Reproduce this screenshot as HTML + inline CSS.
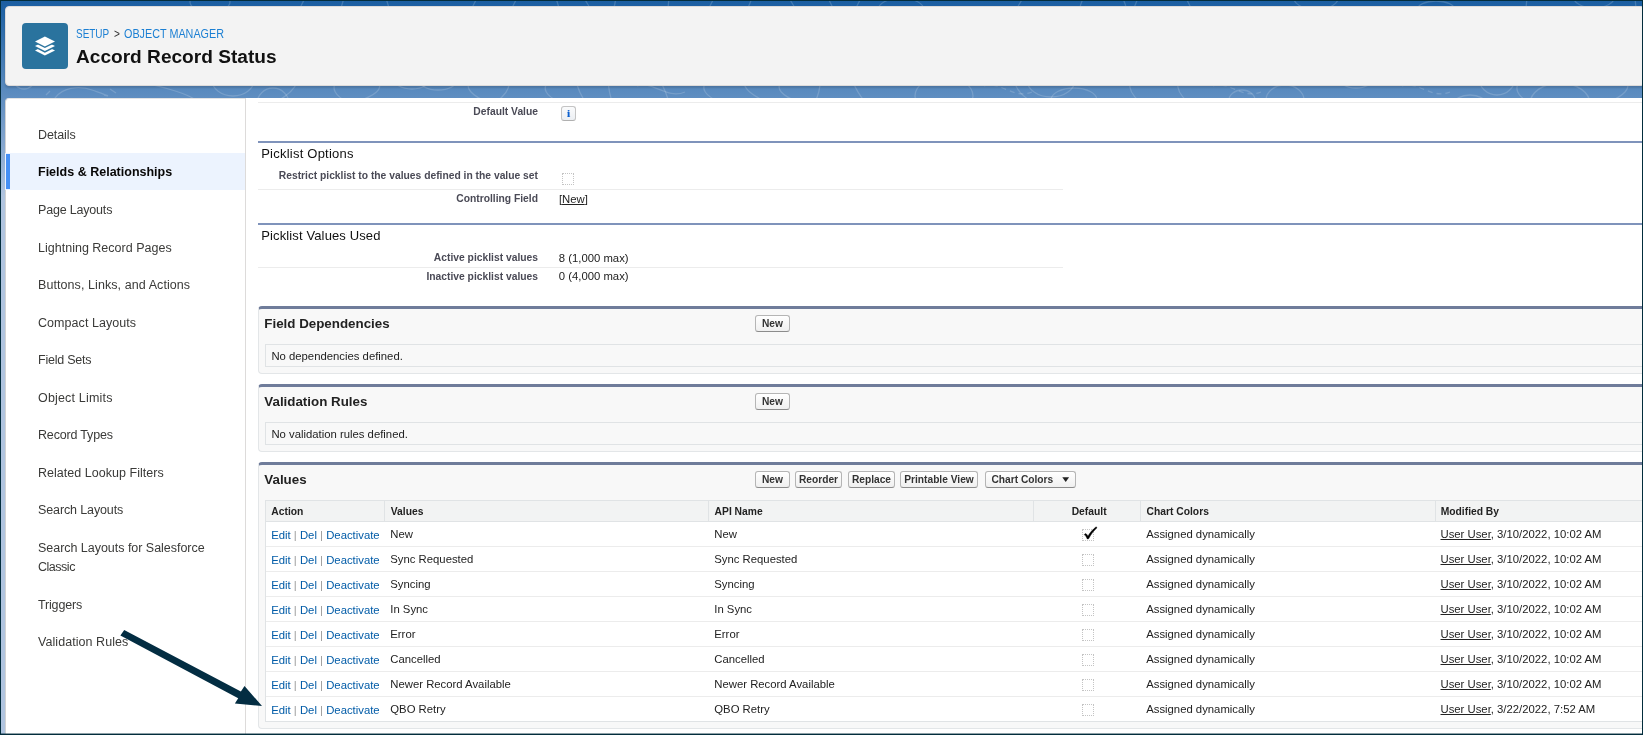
<!DOCTYPE html>
<html lang="en">
<head>
<meta charset="utf-8">
<title>Accord Record Status</title>
<style>
*{box-sizing:border-box;margin:0;padding:0}
html,body{width:1643px;height:735px;overflow:hidden}
body{position:relative;font-family:"Liberation Sans",Arial,sans-serif;color:#222;
 background:#b0c4df linear-gradient(180deg,#1b5ea1 0px,#1d60a3 6px,#5b8bbf 92px,#84a6cf 143px,#b0c4df 196px,#b0c4df 735px)}
#root{position:absolute;left:0;top:0;width:1643px;height:735px;will-change:transform}
.abs{position:absolute}
.t{position:absolute;white-space:nowrap;color:#222}
#frame{position:absolute;left:0;top:0;width:1643px;height:735px;border-style:solid;border-color:#032d3c;border-width:1px 1px 1px 1px;box-shadow:inset 0 -1px 0 rgba(3,45,60,.45);z-index:50;pointer-events:none}
#hdr{left:5px;top:6px;width:1640px;height:80px;background:#f3f3f3;border:1px solid #dddbda;border-radius:4px;box-shadow:0 2px 2px rgba(0,0,0,.14)}
#icon{left:22px;top:23px;width:46px;height:46px;border-radius:4px;background:#2a739e}
.crumb{position:absolute;top:25.5px;font-size:12.3px;line-height:16px;color:#1b7fd3;white-space:nowrap;transform-origin:0 0}
#title{left:76px;top:45px;font-size:19.1px;line-height:24px;font-weight:bold;color:#111;white-space:nowrap}
#side{left:5px;top:98px;width:241px;height:640px;background:#fff;border-radius:4px 0 0 0;border-left:1px solid #d2d2d2;border-top:1px solid #e4e4e4}
#main{left:246px;top:98px;width:1400px;height:640px;background:#fff}
#vdiv{left:245px;top:98px;width:1px;height:640px;background:#dddbda}
.nav{position:absolute;left:38px;font-size:12.5px;line-height:19px;color:#3a3a38;white-space:nowrap}
#act{left:5px;top:153px;width:240px;height:37px;background:#ecf3fe}
#actbar{left:6px;top:154px;width:4px;height:35px;background:#4590f5}
.lab{font-weight:bold;color:#4a4a56}
.sec{color:#111}
.hl{background:#7f93bb}
.sep{background:#ececec}
.blk{background:#f8f8f8;border:1px solid #e3e6e8;border-top:3px solid #6f7c9a;border-radius:4px 0 0 4px;border-right:0}
.inner{background:#f8f8f8;border:1px solid #e0e3e5;border-right:0}
.bt{font-weight:bold;color:#222}
.btn{position:absolute;height:17px;border:1px solid #b5b5b5;border-bottom-color:#8c8c8c;border-radius:3px;background:linear-gradient(#fff,#f0f0f0);font-size:10.2px;line-height:15px;font-weight:bold;color:#333;text-align:center;white-space:nowrap}
.th{font-weight:bold;color:#222}
a,.lk{color:#015ba7;text-decoration:none}
.pipe{color:#9a9a9a}
u{text-decoration:underline}
.cb{position:absolute;width:12px;height:12px;border:1px dotted #c4c4c4}
</style>
</head>
<body>
<div id="root">
<svg class="abs" style="left:0;top:0" width="1643" height="110" viewBox="0 0 1643 110"><g fill="none" stroke="#fff" stroke-opacity=".17" stroke-width="1.3"><circle cx="24" cy="78" r="11"/><path d="M55 98 C62 88 78 85 92 90 S112 97 104 95"/><path d="M46 95 L50 91"/><path d="M110 89 L116 93"/><path d="M150 84 C165 88 185 92 196 100"/><ellipse cx="210" cy="2" rx="20" ry="10"/><ellipse cx="233" cy="80" rx="21" ry="16"/><ellipse cx="273" cy="104" rx="16" ry="16"/><path d="M297 82 Q294 92 276 102"/><path d="M305 -2 L300 8"/><path d="M336 82 Q329 92 347 102"/><path d="M344 -2 L341 8"/><path d="M378 82 Q386 92 356 102"/><path d="M386 -2 L389 8"/><ellipse cx="412" cy="78" rx="19" ry="11"/><ellipse cx="438" cy="80" rx="19" ry="10"/><path d="M469 82 Q464 92 487 102"/><path d="M477 -2 L472 8"/><path d="M509 82 Q510 92 496 102"/><path d="M517 -2 L512 8"/><path d="M548 82 Q539 92 559 102"/><path d="M556 -2 L559 8"/><path d="M576 82 Q579 92 585 102"/><path d="M584 -2 L590 8"/><path d="M608 82 Q609 92 612 102"/><path d="M616 -2 L614 8"/><path d="M637 86 C652 80 667 100 685 92" stroke-dasharray="none"/><path d="M661 82 Q666 92 669 102"/><path d="M669 -2 L668 8"/><path d="M706 82 Q698 92 719 102"/><path d="M714 -2 L709 8"/><path d="M744 82 Q744 92 767 102"/><path d="M752 -2 L748 8"/><path d="M781 82 Q773 92 798 102"/><path d="M789 -2 L795 8"/><path d="M820 82 Q820 92 815 102"/><path d="M828 -2 L833 8"/><path d="M853 82 Q857 92 865 102"/><path d="M861 -2 L856 8"/><ellipse cx="901" cy="10" rx="23" ry="12"/><ellipse cx="944" cy="96" rx="29" ry="19"/><path d="M984 86 C999 80 1014 100 1032 92" stroke-dasharray="5 4"/><path d="M1015 82 Q1016 92 1032 102"/><path d="M1023 -2 L1017 8"/><ellipse cx="1051" cy="80" rx="24" ry="17"/><ellipse cx="1074" cy="100" rx="23" ry="12"/><ellipse cx="1103" cy="10" rx="23" ry="22"/><path d="M1130 82 Q1128 92 1140 102"/><path d="M1138 -2 L1134 8"/><path d="M1178 82 Q1176 92 1188 102"/><path d="M1186 -2 L1191 8"/><path d="M1213 86 C1228 80 1243 100 1261 92" stroke-dasharray="5 4"/><ellipse cx="1242" cy="100" rx="13" ry="10"/><ellipse cx="1285" cy="100" rx="19" ry="15"/><ellipse cx="1316" cy="-4" rx="23" ry="14"/><ellipse cx="1356" cy="78" rx="17" ry="10"/><path d="M1402 86 C1417 80 1432 100 1450 92" stroke-dasharray="5 4"/><ellipse cx="1436" cy="10" rx="19" ry="9"/><ellipse cx="1470" cy="104" rx="16" ry="9"/><ellipse cx="1497" cy="78" rx="18" ry="17"/><path d="M1519 82 Q1512 92 1528 102"/><path d="M1527 -2 L1526 8"/><ellipse cx="1560" cy="104" rx="30" ry="21"/><ellipse cx="1594" cy="-4" rx="21" ry="12"/><path d="M1627 82 Q1632 92 1609 102"/><path d="M1635 -2 L1636 8"/></g></svg>
<div id="hdr" class="abs"></div>
<div id="icon" class="abs"><svg width="46" height="46" viewBox="0 0 46 46"><g fill="#fff" stroke="#2a739e" stroke-width="2.8" stroke-linejoin="miter" paint-order="stroke">
<path d="M13 27.4 L22.9 22.4 L33 27.4 L22.9 32.5 Z"/>
<path d="M13 23 L22.9 18 L33 23 L22.9 28.1 Z"/>
<path d="M13 18.4 L22.9 13.4 L33 18.4 L22.9 23.5 Z"/>
</g></svg></div>
<div class="crumb" style="left:76.3px;transform:scaleX(.81)">SETUP</div>
<div class="crumb" style="left:114px;color:#333;transform:scaleX(.82)">&gt;</div>
<div class="crumb" style="left:124.4px;transform:scaleX(.878)">OBJECT MANAGER</div>
<div id="title" class="abs">Accord Record Status</div>

<div id="side" class="abs"></div>
<div id="main" class="abs"></div>
<div id="vdiv" class="abs"></div>
<div id="act" class="abs"></div>
<div id="actbar" class="abs"></div>

<div class="nav" style="top:125.5px;letter-spacing:-0.086px">Details</div>
<div class="nav" style="top:162.5px;letter-spacing:0.007px;font-weight:bold;color:#080707">Fields &amp; Relationships</div>
<div class="nav" style="top:200.5px;letter-spacing:-0.187px">Page Layouts</div>
<div class="nav" style="top:238.5px;letter-spacing:0.012px">Lightning Record Pages</div>
<div class="nav" style="top:275.5px;letter-spacing:0.077px">Buttons, Links, and Actions</div>
<div class="nav" style="top:313.5px;letter-spacing:0.058px">Compact Layouts</div>
<div class="nav" style="top:350.5px;letter-spacing:-0.222px">Field Sets</div>
<div class="nav" style="top:388.5px;letter-spacing:0.179px">Object Limits</div>
<div class="nav" style="top:425.5px;letter-spacing:-0.173px">Record Types</div>
<div class="nav" style="top:463.5px;letter-spacing:0.030px">Related Lookup Filters</div>
<div class="nav" style="top:500.5px;letter-spacing:-0.120px">Search Layouts</div>
<div class="nav" style="top:538.5px;letter-spacing:-0.030px">Search Layouts for Salesforce</div>
<div class="nav" style="top:557.5px;letter-spacing:-0.483px">Classic</div>
<div class="nav" style="top:595.5px;letter-spacing:-0.170px">Triggers</div>
<div class="nav" style="top:632.5px;letter-spacing:0.060px">Validation Rules</div>
<div class="abs sep" style="left:258px;top:102px;width:1385px;height:1px;"></div>
<div class="t lab" style="top:104.5px;font-size:10.3px;line-height:14.0px;right:1105.00px;">Default Value</div>
<div class="abs" style="left:561px;top:106px;width:15px;height:15px;border:1px solid #c4c4c4;border-bottom-color:#b0b0b0;border-radius:3px;background:linear-gradient(#fafbfc,#eceff3);font-family:'Liberation Serif',serif;font-weight:bold;font-size:10.5px;line-height:13px;text-align:center;color:#0b5fcf"><span style="display:inline-block;transform:scaleX(1.25)">i</span></div>
<div class="abs hl" style="left:258px;top:141px;width:1385px;height:2px;"></div>
<div class="t sec" style="top:146.5px;font-size:13px;line-height:14.0px;left:261.20px;letter-spacing:.23px">Picklist Options</div>
<div class="t lab" style="top:168.5px;font-size:10.3px;line-height:14.0px;right:1105.00px;">Restrict picklist to the values defined in the value set</div>
<div class="cb" style="left:562px;top:173px"></div>
<div class="abs sep" style="left:258px;top:189px;width:805px;height:1px;"></div>
<div class="t lab" style="top:191.5px;font-size:10.3px;line-height:14.0px;right:1105.00px;">Controlling Field</div>
<div class="t " style="top:192.0px;font-size:11.32px;line-height:14.0px;left:558.90px;">[<u>New</u>]</div>
<div class="abs hl" style="left:258px;top:223px;width:1385px;height:2px;"></div>
<div class="t sec" style="top:228.5px;font-size:13px;line-height:14.0px;left:261.20px;letter-spacing:.13px">Picklist Values Used</div>
<div class="t lab" style="top:250.5px;font-size:10.3px;line-height:14.0px;right:1105.00px;">Active picklist values</div>
<div class="t " style="top:251.0px;font-size:11.32px;line-height:14.0px;left:558.80px;">8 (1,000 max)</div>
<div class="abs sep" style="left:258px;top:267px;width:805px;height:1px;"></div>
<div class="t lab" style="top:269.5px;font-size:10.3px;line-height:14.0px;right:1105.00px;">Inactive picklist values</div>
<div class="t " style="top:269.0px;font-size:11.32px;line-height:14.0px;left:558.80px;">0 (4,000 max)</div>
<div class="abs blk" style="left:258px;top:306px;width:1390px;height:68px;"></div>
<div class="t bt" style="top:316.5px;font-size:13.35px;line-height:14.0px;left:264.30px;">Field Dependencies</div>
<div class="btn" style="left:755px;top:315px;width:35px;">New</div>
<div class="abs inner" style="left:265px;top:344px;width:1380px;height:23px;"></div>
<div class="t " style="top:349.0px;font-size:11.32px;line-height:14.0px;left:271.40px;">No dependencies defined.</div>
<div class="abs blk" style="left:258px;top:384px;width:1390px;height:68px;"></div>
<div class="t bt" style="top:394.5px;font-size:13.35px;line-height:14.0px;left:264.30px;">Validation Rules</div>
<div class="btn" style="left:755px;top:393px;width:35px;">New</div>
<div class="abs inner" style="left:265px;top:422px;width:1380px;height:23px;"></div>
<div class="t " style="top:427.0px;font-size:11.32px;line-height:14.0px;left:271.40px;">No validation rules defined.</div>
<div class="abs blk" style="left:258px;top:462px;width:1390px;height:267px;"></div>
<div class="t bt" style="top:472.5px;font-size:13.35px;line-height:14.0px;left:264.30px;">Values</div>
<div class="btn" style="left:755px;top:471px;width:35px;">New</div>
<div class="btn" style="left:795px;top:471px;width:47px;">Reorder</div>
<div class="btn" style="left:848px;top:471px;width:47px;">Replace</div>
<div class="btn" style="left:900px;top:471px;width:78px;">Printable View</div>
<div class="btn" style="left:985px;top:471px;width:91px;text-align:left;padding-left:5.5px">Chart Colors<svg style="position:absolute;left:76px;top:5px" width="8" height="6" viewBox="0 0 8 6"><polygon points="0.3,0.3 7.1,0.3 3.7,4.9" fill="#222"/></svg></div>
<div class="abs " style="left:265px;top:500px;width:1380px;height:222px;background:#fff;border:1px solid #e0e3e5;border-right:0"></div>
<div class="abs " style="left:266px;top:501px;width:1380px;height:20px;background:#f2f3f3"></div>
<div class="abs " style="left:266px;top:521px;width:1380px;height:1px;background:#e0e3e5"></div>
<div class="abs " style="left:384px;top:501px;width:1px;height:20px;background:#e0e3e5"></div>
<div class="abs " style="left:708px;top:501px;width:1px;height:20px;background:#e0e3e5"></div>
<div class="abs " style="left:1033px;top:501px;width:1px;height:20px;background:#e0e3e5"></div>
<div class="abs " style="left:1140px;top:501px;width:1px;height:20px;background:#e0e3e5"></div>
<div class="abs " style="left:1435px;top:501px;width:1px;height:20px;background:#e0e3e5"></div>
<div class="t th" style="top:504.5px;font-size:10.3px;line-height:14.0px;left:271.30px;">Action</div>
<div class="t th" style="top:504.5px;font-size:10.3px;line-height:14.0px;left:390.80px;">Values</div>
<div class="t th" style="top:504.5px;font-size:10.3px;line-height:14.0px;left:714.60px;">API Name</div>
<div class="t th" style="top:504.5px;font-size:10.3px;line-height:14.0px;left:1071.70px;">Default</div>
<div class="t th" style="top:504.5px;font-size:10.3px;line-height:14.0px;left:1146.50px;">Chart Colors</div>
<div class="t th" style="top:504.5px;font-size:10.3px;line-height:14.0px;left:1440.70px;">Modified By</div>
<div class="t " style="top:528.0px;font-size:11.32px;line-height:14.0px;left:271.20px;"><span class="lk">Edit</span> <span class="pipe">|</span> <span class="lk">Del</span> <span class="pipe">|</span> <span class="lk">Deactivate</span></div>
<div class="t " style="top:527.0px;font-size:11.32px;line-height:14.0px;left:390.30px;">New</div>
<div class="t " style="top:527.0px;font-size:11.32px;line-height:14.0px;left:714.30px;">New</div>
<div class="cb" style="left:1082px;top:529px"></div>
<div class="t " style="top:527.0px;font-size:11.32px;line-height:14.0px;left:1146.20px;">Assigned dynamically</div>
<div class="t " style="top:527.0px;font-size:11.32px;line-height:14.0px;left:1440.50px;"><u>User User</u>, 3/10/2022, 10:02 AM</div>
<div class="abs " style="left:266px;top:546px;width:1380px;height:1px;background:#ececec"></div>
<div class="t " style="top:553.0px;font-size:11.32px;line-height:14.0px;left:271.20px;"><span class="lk">Edit</span> <span class="pipe">|</span> <span class="lk">Del</span> <span class="pipe">|</span> <span class="lk">Deactivate</span></div>
<div class="t " style="top:552.0px;font-size:11.32px;line-height:14.0px;left:390.30px;">Sync Requested</div>
<div class="t " style="top:552.0px;font-size:11.32px;line-height:14.0px;left:714.30px;">Sync Requested</div>
<div class="cb" style="left:1082px;top:554px"></div>
<div class="t " style="top:552.0px;font-size:11.32px;line-height:14.0px;left:1146.20px;">Assigned dynamically</div>
<div class="t " style="top:552.0px;font-size:11.32px;line-height:14.0px;left:1440.50px;"><u>User User</u>, 3/10/2022, 10:02 AM</div>
<div class="abs " style="left:266px;top:571px;width:1380px;height:1px;background:#ececec"></div>
<div class="t " style="top:578.0px;font-size:11.32px;line-height:14.0px;left:271.20px;"><span class="lk">Edit</span> <span class="pipe">|</span> <span class="lk">Del</span> <span class="pipe">|</span> <span class="lk">Deactivate</span></div>
<div class="t " style="top:577.0px;font-size:11.32px;line-height:14.0px;left:390.30px;">Syncing</div>
<div class="t " style="top:577.0px;font-size:11.32px;line-height:14.0px;left:714.30px;">Syncing</div>
<div class="cb" style="left:1082px;top:579px"></div>
<div class="t " style="top:577.0px;font-size:11.32px;line-height:14.0px;left:1146.20px;">Assigned dynamically</div>
<div class="t " style="top:577.0px;font-size:11.32px;line-height:14.0px;left:1440.50px;"><u>User User</u>, 3/10/2022, 10:02 AM</div>
<div class="abs " style="left:266px;top:596px;width:1380px;height:1px;background:#ececec"></div>
<div class="t " style="top:603.0px;font-size:11.32px;line-height:14.0px;left:271.20px;"><span class="lk">Edit</span> <span class="pipe">|</span> <span class="lk">Del</span> <span class="pipe">|</span> <span class="lk">Deactivate</span></div>
<div class="t " style="top:602.0px;font-size:11.32px;line-height:14.0px;left:390.30px;">In Sync</div>
<div class="t " style="top:602.0px;font-size:11.32px;line-height:14.0px;left:714.30px;">In Sync</div>
<div class="cb" style="left:1082px;top:604px"></div>
<div class="t " style="top:602.0px;font-size:11.32px;line-height:14.0px;left:1146.20px;">Assigned dynamically</div>
<div class="t " style="top:602.0px;font-size:11.32px;line-height:14.0px;left:1440.50px;"><u>User User</u>, 3/10/2022, 10:02 AM</div>
<div class="abs " style="left:266px;top:621px;width:1380px;height:1px;background:#ececec"></div>
<div class="t " style="top:628.0px;font-size:11.32px;line-height:14.0px;left:271.20px;"><span class="lk">Edit</span> <span class="pipe">|</span> <span class="lk">Del</span> <span class="pipe">|</span> <span class="lk">Deactivate</span></div>
<div class="t " style="top:627.0px;font-size:11.32px;line-height:14.0px;left:390.30px;">Error</div>
<div class="t " style="top:627.0px;font-size:11.32px;line-height:14.0px;left:714.30px;">Error</div>
<div class="cb" style="left:1082px;top:629px"></div>
<div class="t " style="top:627.0px;font-size:11.32px;line-height:14.0px;left:1146.20px;">Assigned dynamically</div>
<div class="t " style="top:627.0px;font-size:11.32px;line-height:14.0px;left:1440.50px;"><u>User User</u>, 3/10/2022, 10:02 AM</div>
<div class="abs " style="left:266px;top:646px;width:1380px;height:1px;background:#ececec"></div>
<div class="t " style="top:653.0px;font-size:11.32px;line-height:14.0px;left:271.20px;"><span class="lk">Edit</span> <span class="pipe">|</span> <span class="lk">Del</span> <span class="pipe">|</span> <span class="lk">Deactivate</span></div>
<div class="t " style="top:652.0px;font-size:11.32px;line-height:14.0px;left:390.30px;">Cancelled</div>
<div class="t " style="top:652.0px;font-size:11.32px;line-height:14.0px;left:714.30px;">Cancelled</div>
<div class="cb" style="left:1082px;top:654px"></div>
<div class="t " style="top:652.0px;font-size:11.32px;line-height:14.0px;left:1146.20px;">Assigned dynamically</div>
<div class="t " style="top:652.0px;font-size:11.32px;line-height:14.0px;left:1440.50px;"><u>User User</u>, 3/10/2022, 10:02 AM</div>
<div class="abs " style="left:266px;top:671px;width:1380px;height:1px;background:#ececec"></div>
<div class="t " style="top:678.0px;font-size:11.32px;line-height:14.0px;left:271.20px;"><span class="lk">Edit</span> <span class="pipe">|</span> <span class="lk">Del</span> <span class="pipe">|</span> <span class="lk">Deactivate</span></div>
<div class="t " style="top:677.0px;font-size:11.32px;line-height:14.0px;left:390.30px;">Newer Record Available</div>
<div class="t " style="top:677.0px;font-size:11.32px;line-height:14.0px;left:714.30px;">Newer Record Available</div>
<div class="cb" style="left:1082px;top:679px"></div>
<div class="t " style="top:677.0px;font-size:11.32px;line-height:14.0px;left:1146.20px;">Assigned dynamically</div>
<div class="t " style="top:677.0px;font-size:11.32px;line-height:14.0px;left:1440.50px;"><u>User User</u>, 3/10/2022, 10:02 AM</div>
<div class="abs " style="left:266px;top:696px;width:1380px;height:1px;background:#ececec"></div>
<div class="t " style="top:703.0px;font-size:11.32px;line-height:14.0px;left:271.20px;"><span class="lk">Edit</span> <span class="pipe">|</span> <span class="lk">Del</span> <span class="pipe">|</span> <span class="lk">Deactivate</span></div>
<div class="t " style="top:702.0px;font-size:11.32px;line-height:14.0px;left:390.30px;">QBO Retry</div>
<div class="t " style="top:702.0px;font-size:11.32px;line-height:14.0px;left:714.30px;">QBO Retry</div>
<div class="cb" style="left:1082px;top:704px"></div>
<div class="t " style="top:702.0px;font-size:11.32px;line-height:14.0px;left:1146.20px;">Assigned dynamically</div>
<div class="t " style="top:702.0px;font-size:11.32px;line-height:14.0px;left:1440.50px;"><u>User User</u>, 3/22/2022, 7:52 AM</div>
<svg class="abs" style="left:1080px;top:524px" width="20" height="18" viewBox="0 0 20 18"><path d="M4.2 10.6 L5.8 9.5 C6.8 10.2 7.4 11.2 7.9 12.2 C10 8.4 13 5.2 16.2 2.8 L17 3.8 C13.6 6.8 10.8 10.6 8.6 14.8 L7.2 14.9 C6.6 13.2 5.6 11.6 4.2 10.6 Z" fill="#000" stroke="#000" stroke-width=".45" stroke-linejoin="round"/></svg>
<svg class="abs" style="left:100px;top:615px;z-index:20" width="200" height="120" viewBox="100 615 200 120">
<polygon points="124.2,630 120.4,635.4 238.2,698.2 234.9,703.5 262,706 244.5,686 240.9,691.4" fill="#032d42"/>
</svg>
<div id="frame"></div>
</div>
</body>
</html>
